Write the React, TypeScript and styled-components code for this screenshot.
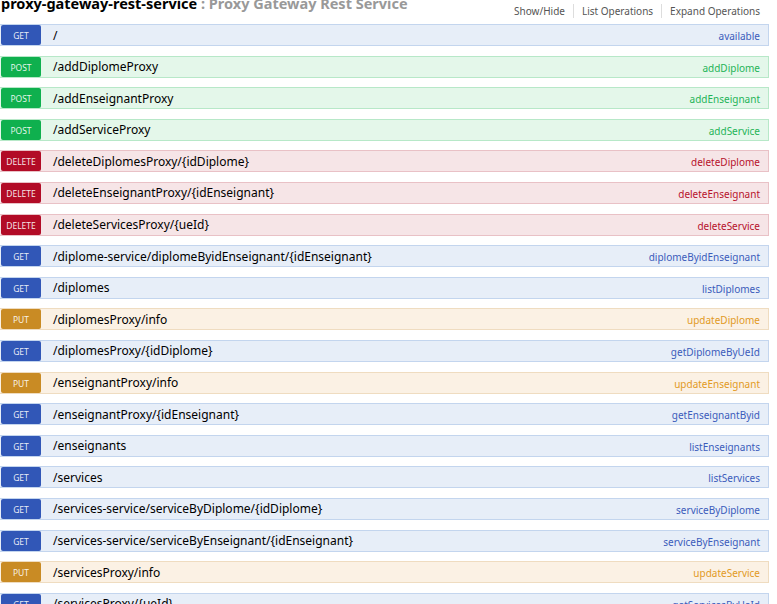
import React from "react";
import styled, { createGlobalStyle } from "styled-components";

const GlobalStyle = createGlobalStyle`
  html, body { margin: 0; padding: 0; background: #fff; }
  body { font-family: "Noto Sans", "Open Sans", sans-serif; overflow: hidden; }
`;

type Method = "get" | "post" | "delete" | "put";

const palette: Record<Method, { badge: string; bg: string; border: string; text: string }> = {
  get: { badge: "#3157b7", bg: "#e7eef8", border: "#c3d5ee", text: "#3b5cbb" },
  post: { badge: "#0fb04e", bg: "#e4f7ea", border: "#b7e8c8", text: "#1fb458" },
  delete: { badge: "#b20b26", bg: "#f6e5e7", border: "#e9c1c6", text: "#b7122c" },
  put: { badge: "#c98b24", bg: "#fbf1e4", border: "#efdcc0", text: "#e29a25" },
};

const Page = styled.div`
  padding: 0 8px 0 0;
`;

const Header = styled.div`
  display: flex;
  justify-content: space-between;
  align-items: flex-start;
  height: 24px;
`;

const Title = styled.h2`
  margin: -4px 0 0 1px;
  font-size: 14.5px;
  line-height: 15px;
  font-weight: bold;
  color: #000;
  white-space: nowrap;
`;

const SubTitle = styled.span`
  color: #999;
`;

const Links = styled.ul`
  display: flex;
  list-style: none;
  margin: 4px 0 0 0;
  padding: 0 9px 0 0;
`;

const LinkItem = styled.li<{ $first?: boolean }>`
  font-size: 10px;
  line-height: 14px;
  color: #555;
  padding: 0 8px;
  border-left: ${(p) => (p.$first ? "none" : "1px solid #ddd")};
  &:last-child { padding-right: 0; }
`;

const Ops = styled.ul`
  list-style: none;
  margin: 0;
  padding: 0;
`;

const Op = styled.li`
  margin: 0 0 9.6px 0;
`;

const Heading = styled.div<{ $m: Method }>`
  box-sizing: border-box;
  height: 22px;
  display: flex;
  align-items: center;
  background: ${(p) => palette[p.$m].bg};
  border: 1px solid ${(p) => palette[p.$m].border};
  border-left: none;
`;

const Badge = styled.span<{ $m: Method }>`
  box-sizing: border-box;
  width: 40px;
  height: 20px;
  margin-left: 1px;
  flex: none;
  display: flex;
  align-items: center;
  justify-content: center;
  background: ${(p) => palette[p.$m].badge};
  color: rgba(255, 255, 255, 0.9);
  border-radius: 2px;
  font-size: 8.5px;
  text-transform: uppercase;
  padding-top: 1px;
`;

const Path = styled.span`
  flex: 1;
  padding-left: 12px;
  font-size: 12px;
  color: #000;
  white-space: nowrap;
`;

const Name = styled.span<{ $m: Method }>`
  padding-right: 8px;
  font-size: 10px;
  color: ${(p) => palette[p.$m].text};
  white-space: nowrap;
  padding-top: 2px;
`;

const operations: { m: Method; path: string; name: string }[] = [
  { m: "get", path: "/", name: "available" },
  { m: "post", path: "/addDiplomeProxy", name: "addDiplome" },
  { m: "post", path: "/addEnseignantProxy", name: "addEnseignant" },
  { m: "post", path: "/addServiceProxy", name: "addService" },
  { m: "delete", path: "/deleteDiplomesProxy/{idDiplome}", name: "deleteDiplome" },
  { m: "delete", path: "/deleteEnseignantProxy/{idEnseignant}", name: "deleteEnseignant" },
  { m: "delete", path: "/deleteServicesProxy/{ueId}", name: "deleteService" },
  { m: "get", path: "/diplome-service/diplomeByidEnseignant/{idEnseignant}", name: "diplomeByidEnseignant" },
  { m: "get", path: "/diplomes", name: "listDiplomes" },
  { m: "put", path: "/diplomesProxy/info", name: "updateDiplome" },
  { m: "get", path: "/diplomesProxy/{idDiplome}", name: "getDiplomeByUeId" },
  { m: "put", path: "/enseignantProxy/info", name: "updateEnseignant" },
  { m: "get", path: "/enseignantProxy/{idEnseignant}", name: "getEnseignantByid" },
  { m: "get", path: "/enseignants", name: "listEnseignants" },
  { m: "get", path: "/services", name: "listServices" },
  { m: "get", path: "/services-service/serviceByDiplome/{idDiplome}", name: "serviceByDiplome" },
  { m: "get", path: "/services-service/serviceByEnseignant/{idEnseignant}", name: "serviceByEnseignant" },
  { m: "put", path: "/servicesProxy/info", name: "updateService" },
  { m: "get", path: "/servicesProxy/{ueId}", name: "getServicesByUeId" },
];

export default function App() {
  return (
    <Page>
      <GlobalStyle />
      <Header>
        <Title>
          proxy-gateway-rest-service <SubTitle>: Proxy Gateway Rest Service</SubTitle>
        </Title>
        <Links>
          <LinkItem $first>Show/Hide</LinkItem>
          <LinkItem>List Operations</LinkItem>
          <LinkItem>Expand Operations</LinkItem>
        </Links>
      </Header>
      <Ops>
        {operations.map((op) => (
          <Op key={op.m + op.path}>
            <Heading $m={op.m}>
              <Badge $m={op.m}>{op.m}</Badge>
              <Path>{op.path}</Path>
              <Name $m={op.m}>{op.name}</Name>
            </Heading>
          </Op>
        ))}
      </Ops>
    </Page>
  );
}
